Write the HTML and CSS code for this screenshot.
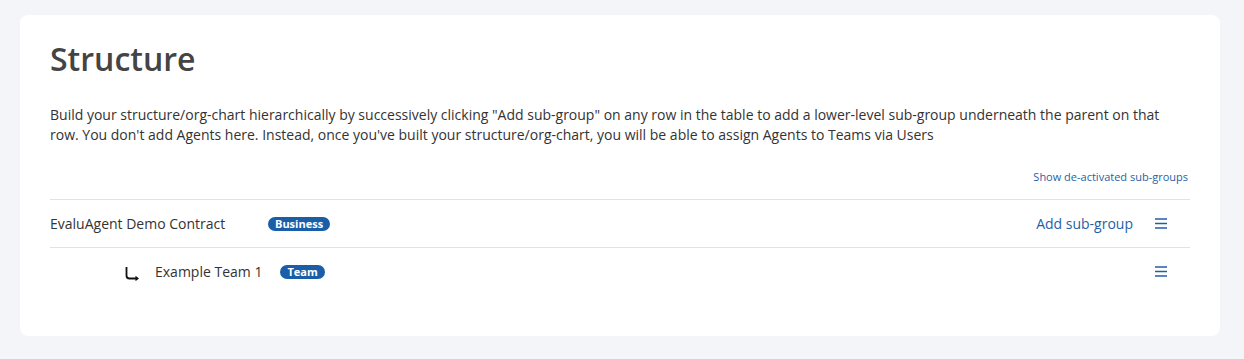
FILE: index.html
```html
<!DOCTYPE html>
<html lang="en">
<head>
<meta charset="utf-8">
<title>Structure</title>
<link rel="stylesheet" href="styles.css">
</head>
<body>
<main class="card">
  <h1 class="title">Structure</h1>
  <p class="intro">Build your structure/org-chart hierarchically by successively clicking "Add sub-group" on any row in the table to add a lower-level sub-group underneath the parent on that row. You don't add Agents here. Instead, once you've built your structure/org-chart, you will be able to assign Agents to Teams via Users</p>
  <div class="toolbar"><a class="toggle-link" href="#">Show de-activated sub-groups</a></div>
  <div class="table">
    <div class="row">
      <div class="cell-name">
        <span class="name name-top">EvaluAgent Demo Contract</span>
        <span class="badge">Business</span>
      </div>
      <div class="actions">
        <a class="add-link" href="#">Add sub-group</a>
        <svg class="menu" width="12" height="11" viewBox="0 0 12 11"><path d="M0 1h12M0 5.5h12M0 10h12" stroke="#1f5fa6" stroke-width="1.6" fill="none"/></svg>
      </div>
    </div>
    <div class="row">
      <div class="cell-name child">
        <svg class="branch" width="15" height="14" viewBox="0 0 15 14"><path d="M1.5 0v8.5q0 3 3 3h7.5" stroke="#111" stroke-width="1.8" fill="none"/><path d="M10.5 8.8l3.5 2.7-3.5 2.7z" fill="#111"/></svg>
        <span class="name">Example Team 1</span>
        <span class="badge">Team</span>
      </div>
      <div class="actions">
        <svg class="menu" width="12" height="11" viewBox="0 0 12 11"><path d="M0 1h12M0 5.5h12M0 10h12" stroke="#1f5fa6" stroke-width="1.6" fill="none"/></svg>
      </div>
    </div>
  </div>
</main>
</body>
</html>
```
FILE: styles.css
```css
html, body {
  margin: 0;
  padding: 0;
}
body {
  background: #f4f5f9;
  font-family: "Open Sans", "Liberation Sans", sans-serif;
  color: #333;
  padding: 15px 24px 24px 20px;
}
.card {
  background: #fff;
  border-radius: 8px;
  width: 1200px;
  box-sizing: border-box;
  padding: 22px 30px 41px 30px;
}
.title {
  margin: 0;
  font-size: 32px;
  font-weight: 600;
  line-height: 44px;
  color: #444;
}
.intro {
  margin: 24px 0 0 0;
  font-size: 14px;
  line-height: 20px;
  color: #333;
}
.toolbar {
  display: flex;
  justify-content: flex-end;
  margin-top: 24px;
  padding-right: 2px;
  padding-bottom: 14px;
}
.toggle-link {
  font-size: 11px;
  line-height: 16px;
  color: #1f5fa6;
  text-decoration: none;
}
.table {
  border-top: 1px solid #e2e2e2;
}
.row {
  display: flex;
  align-items: center;
  justify-content: space-between;
  height: 47px;
}
.row + .row {
  border-top: 1px solid #e2e2e2;
}
.cell-name {
  display: flex;
  align-items: center;
}
.child {
  padding-left: 75px;
}
.name {
  font-size: 14px;
  color: #333;
  margin-right: 18px;
}
.name-top {
  min-width: 218px;
  margin-right: 0;
}
.branch {
  margin-right: 15px;
  margin-top: 4px;
}
.badge {
  display: inline-flex;
  align-items: center;
  height: 14px;
  padding: 0 7px;
  border-radius: 8px;
  background: #1b5ea8;
  color: #fff;
  font-size: 11px;
  font-weight: 700;
  line-height: 14px;
  margin-top: 1px;
}
.actions {
  display: flex;
  align-items: center;
  padding-right: 23px;
}
.add-link {
  font-size: 14px;
  color: #1f5fa6;
  text-decoration: none;
  margin-right: 22px;
}
.menu {
  display: block;
}
```
